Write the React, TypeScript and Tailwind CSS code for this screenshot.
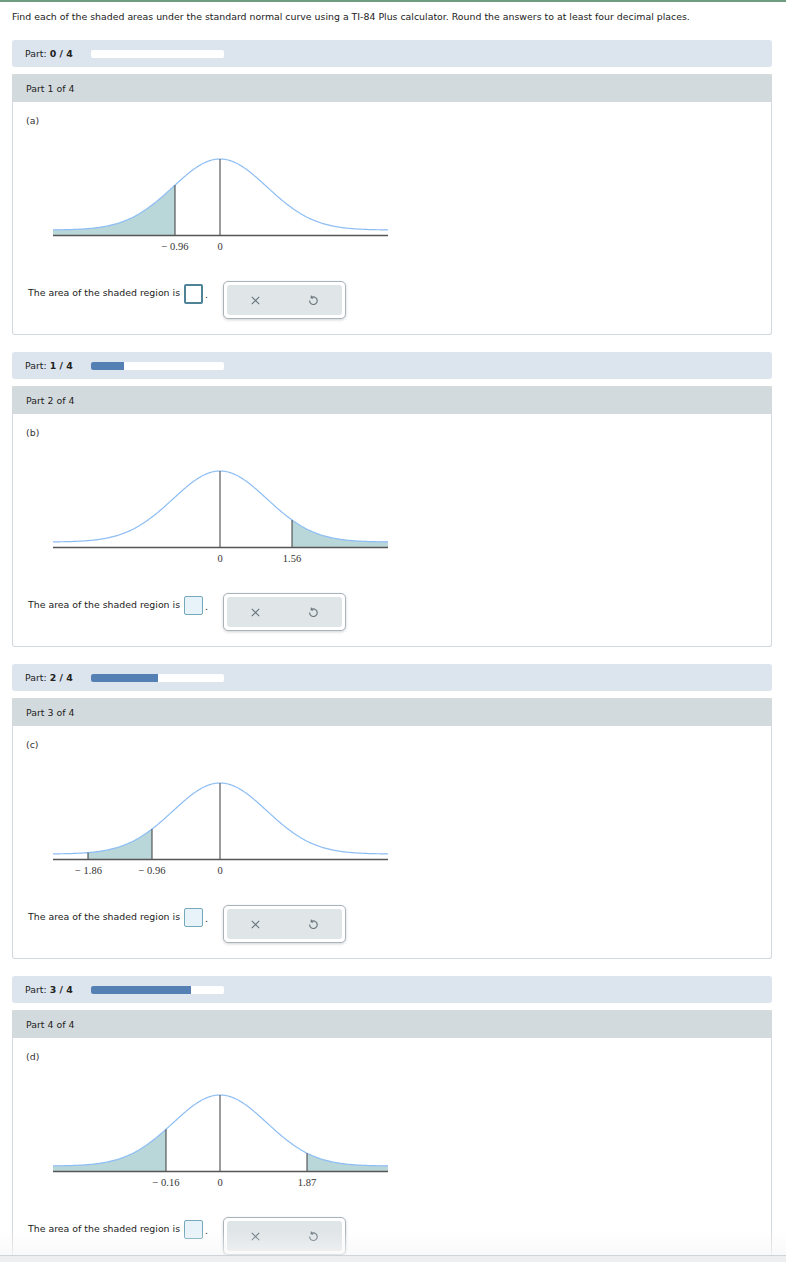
import React from "react";

type Graph = {
  letter: string;
  shades: [number, number][];
  lines: number[];
  labels: { x: number; t: string }[];
};

const SX = 40; // page x of svg left
const SY = 150; // page y of svg top (part 1)
const BASE = 230;
const AMP = 71;
const SIG = 47;
const CX = 220;
const AXIS = 235.5;
const X0 = 53;
const X1 = 388;

function cy(x: number) {
  const d = (x - CX) / SIG;
  return BASE - AMP * Math.exp(-(d * d) / 2);
}

function curvePath(a: number, b: number) {
  const pts: string[] = [];
  for (let x = a; x <= b + 0.001; x += 1) {
    pts.push(`${(x - SX).toFixed(2)},${(cy(x) - SY).toFixed(2)}`);
  }
  return pts;
}

function NormalCurve({ g }: { g: Graph }) {
  const full = curvePath(X0, X1);
  return (
    <svg width="400" height="106" viewBox="0 0 400 106" className="block">
      {g.shades.map(([a, b], i) => {
        const pts = curvePath(a, b);
        const d = `M${a - SX},${AXIS - SY} L${pts.join(" L")} L${b - SX},${AXIS - SY} Z`;
        return <path key={i} d={d} fill="#b9d6d8" />;
      })}
      <path d={`M${full.join(" L")}`} fill="none" stroke="#8dbdf3" strokeWidth="1.2" />
      {g.lines.map((x, i) => (
        <line
          key={i}
          x1={x - SX}
          x2={x - SX}
          y1={AXIS - SY}
          y2={cy(x) - SY}
          stroke="#3a3a3a"
          strokeWidth="1"
        />
      ))}
      <line x1={X0 - SX} x2={X1 - SX} y1={AXIS - SY} y2={AXIS - SY} stroke="#555" strokeWidth="1.3" />
      {g.labels.map((l, i) => (
        <text
          key={i}
          x={l.x - SX}
          y={99.5}
          textAnchor="middle"
          fontFamily="'Liberation Serif', serif"
          fontSize="10.5"
          fill="#333"
        >
          {l.t}
        </text>
      ))}
    </svg>
  );
}

function XIcon() {
  return (
    <svg width="9" height="9" viewBox="0 0 9 9">
      <path d="M0.8 0.8 L8.2 8.2 M8.2 0.8 L0.8 8.2" stroke="#66727b" strokeWidth="1.1" fill="none" />
    </svg>
  );
}

function UndoIcon() {
  return (
    <svg width="10" height="11" viewBox="0 0 10 11">
      <path d="M3.2 2.6 A3.8 3.8 0 1 1 1.6 5.6" stroke="#66727b" strokeWidth="1.1" fill="none" />
      <path d="M3.4 0.6 L3.2 2.7 L5.3 3.1" stroke="#66727b" strokeWidth="1.1" fill="none" />
    </svg>
  );
}

const graphs: Graph[] = [
  {
    letter: "a",
    shades: [[53, 175]],
    lines: [175, 220],
    labels: [
      { x: 175, t: "\u2212 0.96" },
      { x: 220, t: "0" },
    ],
  },
  {
    letter: "b",
    shades: [[292, 388]],
    lines: [220, 292],
    labels: [
      { x: 220, t: "0" },
      { x: 292, t: "1.56" },
    ],
  },
  {
    letter: "c",
    shades: [[88, 152]],
    lines: [88, 152, 220],
    labels: [
      { x: 88.5, t: "\u2212 1.86" },
      { x: 152, t: "\u2212 0.96" },
      { x: 220, t: "0" },
    ],
  },
  {
    letter: "d",
    shades: [
      [53, 166],
      [307, 388],
    ],
    lines: [166, 220, 307],
    labels: [
      { x: 166, t: "\u2212 0.16" },
      { x: 220, t: "0" },
      { x: 307, t: "1.87" },
    ],
  },
];

const fills = ["w-0", "w-[33px]", "w-[67px]", "w-[100px]"];

function Part({ i, g }: { i: number; g: Graph }) {
  return (
    <div className={i === 0 ? "" : "mt-[17px]"}>
      <div className="flex h-[27px] items-center rounded-[3px] bg-[#dce5ee] pl-[13px]">
        <div className="w-[66px] text-[9.4px] leading-[12px] text-[#222]">
          Part: <span className="font-bold">{i} / 4</span>
        </div>
        <div className="h-[8px] w-[133px] overflow-hidden rounded-[2px] bg-white">
          <div className={`h-full ${fills[i]} bg-[#5580b4]`} />
        </div>
      </div>
      <div className="mt-[7px] rounded-b-[3px] border-x border-b border-[#d3d9dc]">
        <div className="-mx-px flex h-[28px] items-center rounded-t-[3px] bg-[#d3dadd] pl-[14px] pt-[2px] text-[9.4px] leading-[12px] text-[#222]">
          Part {i + 1} of 4
        </div>
        <div className="pl-[13px] pt-[12px] text-[9.4px] leading-[14px] text-[#333]">({g.letter})</div>
        <div className="ml-[27px] mt-[22px]">
          <NormalCurve g={g} />
        </div>
        <div className="mt-[25px] flex items-start pb-[15px] pl-[15px]">
          <div className="mt-[2px] flex h-[21px] w-[195px] items-center text-[9.4px] text-[#222]">
            <span>The area of the shaded region is</span>
            <span
              className={
                i === 0
                  ? "ml-[4px] h-[20px] w-[19px] rounded-[2px] border-2 border-[#4e8398] bg-white"
                  : "ml-[4px] h-[19px] w-[19px] rounded-[2px] border border-[#76a8bc] bg-[#e8f3f9]"
              }
            />
            <span className="ml-[2px] self-end pb-[4px] leading-[10px]">.</span>
          </div>
          <div className="rounded-[5px] border border-[#a9b4ba] bg-white p-[3px] shadow-[0_1px_3px_rgba(0,0,0,0.18)]">
            <div className="flex h-[30px] w-[115px] rounded-[3px] bg-[#e0e5e8]">
              <div className="flex flex-1 items-center justify-center">
                <XIcon />
              </div>
              <div className="flex flex-1 items-center justify-center">
                <UndoIcon />
              </div>
            </div>
          </div>
        </div>
      </div>
    </div>
  );
}

export default function App() {
  return (
    <div className="min-h-[1262px] bg-white font-['DejaVu_Sans',sans-serif] text-[#222]">
      <div className="h-[2px] bg-[#6d9d7f]" />
      <p className="ml-[12px] mt-[9px] whitespace-nowrap text-[9.4px] leading-[12px] text-[#222]">
        Find each of the shaded areas under the standard normal curve using a TI-84 Plus calculator. Round the answers to
        at least four decimal places.
      </p>
      <div className="ml-[12px] mt-[17px] w-[760px] pb-[40px]">
        {graphs.map((g, i) => (
          <Part key={i} i={i} g={g} />
        ))}
      </div>
      <div className="pointer-events-none fixed inset-x-0 bottom-[7px] h-[24px] bg-gradient-to-b from-white/0 to-[#f6f6f6]/70" />
      <div className="fixed inset-x-0 bottom-0 h-[7px] border-t border-[#cfd4d8] bg-[#eceef0]" />
    </div>
  );
}
